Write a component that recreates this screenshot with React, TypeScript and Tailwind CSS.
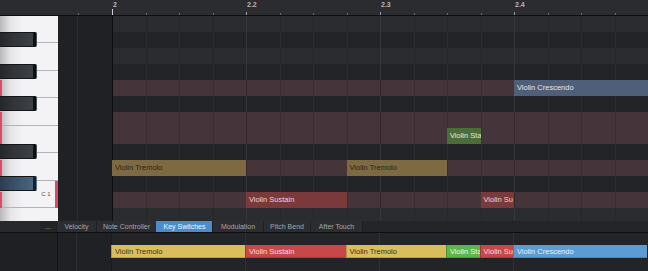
type Tone = 'light' | 'dark' | 'ks';
type NoteColor = 'gold' | 'red' | 'blue' | 'green';

interface Clip {
  start: number;
  span: number;
  label: string;
  color: NoteColor;
}

interface Row {
  tone: Tone;
  clips?: Clip[];
  last?: boolean;
}

const rowBg: Record<Tone, string> = {
  light: 'bg-[#2b2c30]',
  dark: 'bg-[#232427]',
  ks: 'bg-[#45353b]',
};

const subLine: Record<Tone, string> = {
  light: 'border-[#26272b]',
  dark: 'border-[#2c2d31]',
  ks: 'border-[#3a2c31]',
};

const beatLine: Record<Tone, string> = {
  light: 'border-[#37383c]',
  dark: 'border-[#36373b]',
  ks: 'border-[#33282c]',
};

const noteColors: Record<NoteColor, string> = {
  gold: 'bg-[#7e6a42] text-[#2a2419]',
  red: 'bg-[#7a3a3c] text-[#ecd4d4]',
  blue: 'bg-[#4f5e79] text-[#e1e7f0]',
  green: 'bg-[#4c6d3a] text-[#e2ecd9]',
};

const laneColors: Record<NoteColor, string> = {
  gold: 'bg-[#d9be5b] text-[#3b3422]',
  red: 'bg-[#c8484a] text-[#f6dede]',
  blue: 'bg-[#5b9dd3] text-[#e8f1fa]',
  green: 'bg-[#5db64a] text-[#edf7e8]',
};

// short clips only show the start of their name
const rows: Row[] = [
  { tone: 'light' },
  { tone: 'dark' },
  { tone: 'light' },
  { tone: 'dark' },
  { tone: 'ks', clips: [{ start: 12, span: 4, label: 'Violin Crescendo', color: 'blue' }] },
  { tone: 'dark' },
  { tone: 'ks' },
  { tone: 'ks', clips: [{ start: 10, span: 1, label: 'Violin Sta', color: 'green' }] },
  { tone: 'dark' },
  {
    tone: 'ks',
    clips: [
      { start: 0, span: 4, label: 'Violin Tremolo', color: 'gold' },
      { start: 7, span: 3, label: 'Violin Tremolo', color: 'gold' },
    ],
  },
  { tone: 'dark' },
  {
    tone: 'ks',
    clips: [
      { start: 4, span: 3, label: 'Violin Sustain', color: 'red' },
      { start: 11, span: 1, label: 'Violin Su', color: 'red' },
    ],
  },
  { tone: 'light', last: true },
];

const laneClips: Clip[] = [
  { start: 0, span: 4, label: 'Violin Tremolo', color: 'gold' },
  { start: 4, span: 3, label: 'Violin Sustain', color: 'red' },
  { start: 7, span: 3, label: 'Violin Tremolo', color: 'gold' },
  { start: 10, span: 1, label: 'Violin Sta', color: 'green' },
  { start: 11, span: 1, label: 'Violin Su', color: 'red' },
  { start: 12, span: 4, label: 'Violin Crescendo', color: 'blue' },
];

const tabs = [
  { label: 'Velocity', w: 'w-[40px]' },
  { label: 'Note Controller', w: 'w-[60px]' },
  { label: 'Key Switches', w: 'w-[56px]', active: true },
  { label: 'Modulation', w: 'w-[51px]' },
  { label: 'Pitch Bend', w: 'w-[47px]' },
  { label: 'After Touch', w: 'w-[52px]' },
];

const cols = Array.from({ length: 16 }, (_, i) => i);

function Ruler() {
  return (
    <div className="flex h-[16px] shrink-0 border-b border-[#0d0e0f] bg-[#2b2c30]">
      <div className="w-[58px]" />
      <div className="flex w-[54px]">
        <div className="w-[20px]" />
        <div className="flex flex-1 items-end">
          <div className="h-[2px] w-px bg-[#6a6b6e]" />
        </div>
      </div>
      <div className="grid grid-cols-[repeat(16,33.5px)]">
        {cols.map((i) => (
          <div key={i} className="flex flex-col justify-between">
            <span className="h-[9px] pl-px pt-px text-[7px] font-bold leading-[8px] text-[#b4b5b8]">
              {i % 4 === 0 ? (i === 0 ? '2' : `2.${i / 4 + 1}`) : ''}
            </span>
            {i === 0 ? (
              <div className="h-[6px] w-px bg-[#d0d0d2]" />
            ) : i % 4 === 0 ? (
              <div className="h-[3px] w-px bg-[#9c9da0]" />
            ) : (
              <div className="h-[2px] w-px bg-[#6a6b6e]" />
            )}
          </div>
        ))}
      </div>
    </div>
  );
}

function WhiteKey({ h, label, last }: { h: string; label?: string; last?: boolean }) {
  return (
    <div
      className={`${h} flex items-center justify-end pr-[6px] bg-[linear-gradient(to_right,#b9b9bd,#e6e6e8_18%,#f3f3f5_40%)] ${
        last ? '' : 'border-b border-[#b4b4b8]'
      }`}
    >
      {label && (
        <span className="text-[6px] leading-none tracking-[1.5px] text-[#505154]">{label}</span>
      )}
    </div>
  );
}

const blackKeys = [
  { top: 'top-[16px]', blue: false },
  { top: 'top-[48px]', blue: false },
  { top: 'top-[80px]', blue: false },
  { top: 'top-[128px]', blue: false },
  { top: 'top-[160px]', blue: true },
];

const leftMarks = ['top-[64px] h-[16px]', 'top-[96px] h-[32px]', 'top-[144px] h-[16px]', 'top-[176px] h-[16px]'];

function Piano() {
  return (
    <div className="relative flex w-[58px] shrink-0 flex-col overflow-hidden bg-[#f3f3f5]">
      {['B1', 'A1', 'G1', 'F1', 'E1', 'D1'].map((k) => (
        <WhiteKey key={k} h="h-[27.43px]" />
      ))}
      <WhiteKey h="h-[27.43px]" label="C1" />
      <WhiteKey h="flex-1" last />

      {blackKeys.map((k) => (
        <div
          key={k.top}
          className={`absolute left-0 ${k.top} flex h-[15px] w-[37px] justify-end rounded-r-[2px] border-y border-[#151618] ${
            k.blue
              ? 'bg-[linear-gradient(to_right,#2c3c4e,#3b5169_40%,#4a6580_88%)]'
              : 'bg-[linear-gradient(to_right,#24262a,#32353a_40%,#3d4045_88%)]'
          }`}
        >
          <div className={`h-full w-[4px] border-r ${k.blue ? 'bg-[#152030] border-[#58708a]' : 'bg-[#0e0f11] border-[#4a4d52]'}`} />
        </div>
      ))}

      {leftMarks.map((m) => (
        <div key={m} className={`absolute left-0 w-[2px] bg-[#e04a62] ${m}`} />
      ))}
      <div className="absolute left-[55px] top-[165px] h-[27px] w-[3px] bg-[#d94b5e]" />
    </div>
  );
}

function PreRoll() {
  return (
    <div className="flex w-[54px] shrink-0 bg-[#202124]">
      <div className="w-[20px] border-r border-[#2c2d31]" />
      <div className="flex-1" />
    </div>
  );
}

function NoteRow({ row }: { row: Row }) {
  return (
    <div
      className={`grid grid-cols-[repeat(16,33.5px)] ${row.last ? 'h-[13px]' : 'h-[16px]'} ${rowBg[row.tone]}`}
    >
      {cols.map((i) => (
        <div
          key={i}
          style={{ gridColumn: i + 1, gridRow: 1 }}
          className={`border-l ${i === 0 ? 'border-[#0d0e0f]' : i % 4 === 0 ? beatLine[row.tone] : subLine[row.tone]}`}
        />
      ))}
      {row.clips?.map((c) => (
        <div
          key={c.start}
          style={{ gridColumn: `${c.start + 1} / span ${c.span}`, gridRow: 1 }}
          className={`overflow-hidden whitespace-nowrap pl-[3px] text-[7.5px] leading-[16px] ${noteColors[c.color]}`}
        >
          {c.label}
        </div>
      ))}
    </div>
  );
}

function TabBar() {
  return (
    <div className="flex h-[12px] shrink-0 border-b border-[#0d0e0f] bg-[#28292d] text-[7px] leading-[11px] text-[#a4a5a8]">
      <div className="w-[40px]" />
      <div className="w-[16px] bg-[#232428] text-center">...</div>
      {tabs.map((t) => (
        <div
          key={t.label}
          className={`${t.w} border-l text-center ${
            t.active ? 'border-[#4a8dcc] bg-[#4a8dcc] text-[#f2f7fd]' : 'border-[#1e1f22] bg-[#2c2d31]'
          }`}
        >
          {t.label}
        </div>
      ))}
      <div className="flex-1 border-l border-[#1e1f22] bg-[#242528]" />
    </div>
  );
}

function Lane() {
  return (
    <div className="flex flex-1">
      <div className="w-[58px] shrink-0 border-r border-[#141517] bg-[#1f2023]" />
      <div className="flex w-[53px] shrink-0 bg-[#202124]">
        <div className="w-[19px] border-r border-[#2c2d31]" />
        <div className="flex-1" />
      </div>
      <div className="grid grid-cols-[repeat(16,33.5px)] grid-rows-[12px_13px_1fr] bg-[#232427]">
        {cols.map((i) => (
          <div
            key={i}
            style={{ gridColumn: i + 1, gridRow: '1 / 4' }}
            className={i % 4 === 0 ? `border-l ${i === 0 ? 'border-[#1a1b1d]' : 'border-[#303135]'}` : ''}
          />
        ))}
        {laneClips.map((c) => (
          <div
            key={c.start}
            style={{ gridColumn: `${c.start + 1} / span ${c.span}`, gridRow: 2 }}
            className={`overflow-hidden whitespace-nowrap border-l border-black/20 pl-[3px] text-[7.5px] leading-[13px] shadow-[inset_0_-1px_0_rgba(0,0,0,0.15)] ${laneColors[c.color]}`}
          >
            {c.label}
          </div>
        ))}
      </div>
    </div>
  );
}

export default function App() {
  return (
    <div className="flex h-[271px] w-[648px] flex-col overflow-hidden bg-[#232427] font-['Liberation_Sans',Arial,sans-serif] select-none">
      <Ruler />
      <div className="flex h-[205px] shrink-0">
        <Piano />
        <PreRoll />
        <div className="flex flex-col">
          {rows.map((row, i) => (
            <NoteRow key={i} row={row} />
          ))}
        </div>
      </div>
      <TabBar />
      <Lane />
    </div>
  );
}
